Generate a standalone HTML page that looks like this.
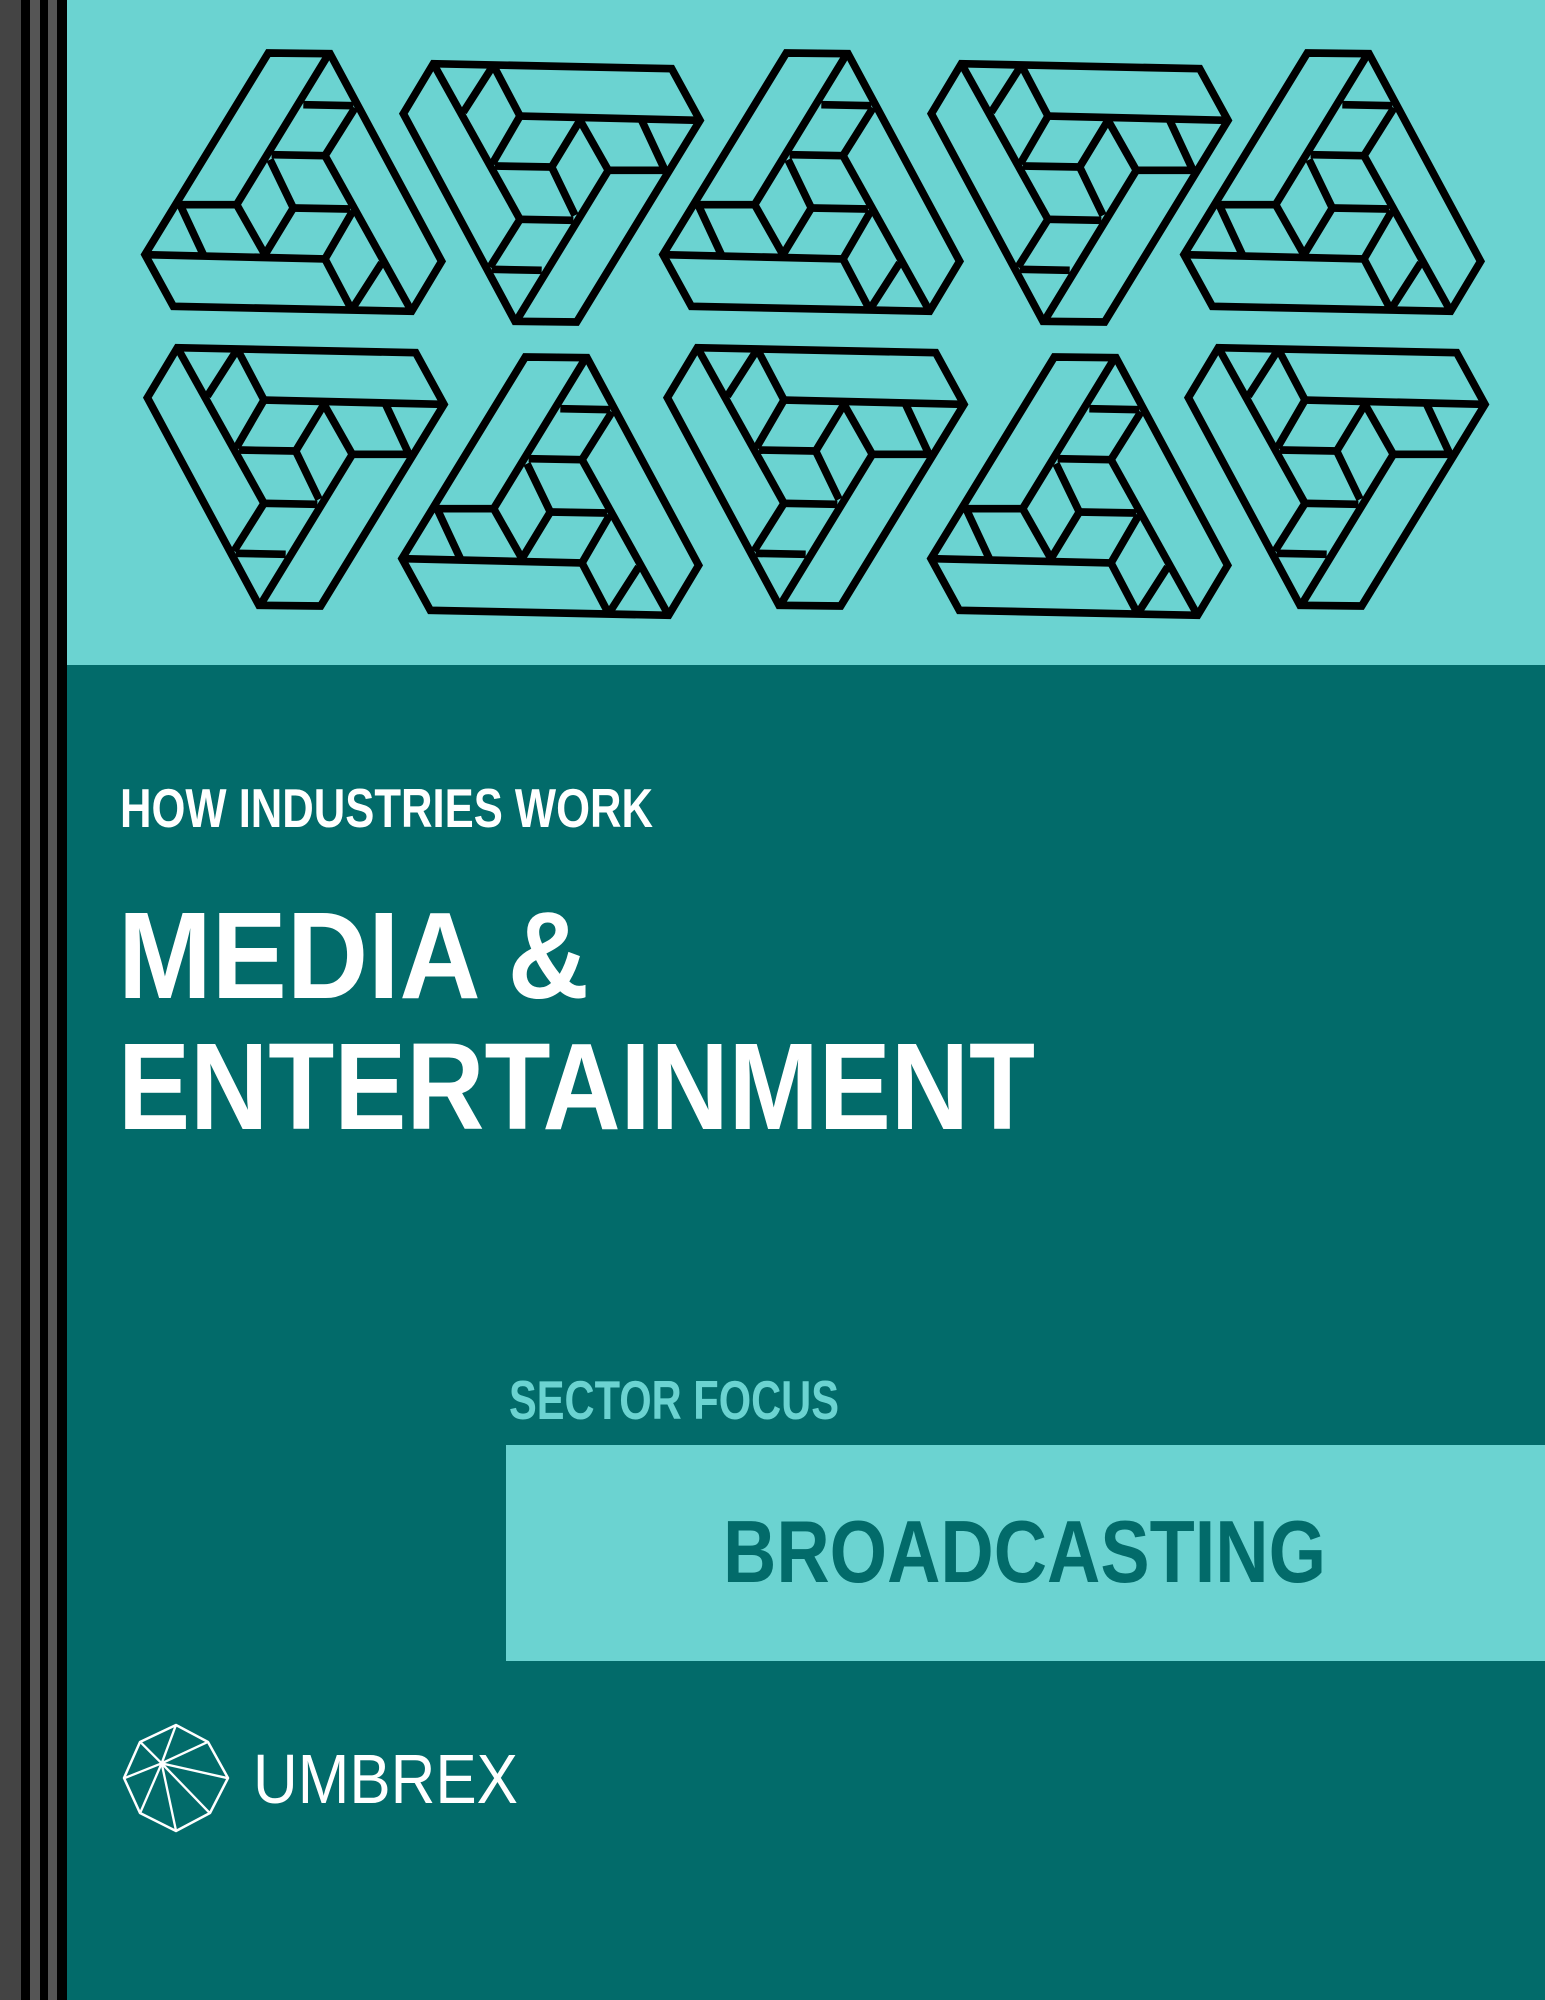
<!DOCTYPE html>
<html><head><meta charset="utf-8"><style>
html,body{margin:0;padding:0;background:#026b6a;}
svg{display:block}
</style></head><body>
<svg width="1545" height="2000" viewBox="0 0 1545 2000" xmlns="http://www.w3.org/2000/svg">
<defs>
<g id="tri" fill="none" stroke="#000" stroke-width="23" stroke-linejoin="miter" transform="scale(0.3333) translate(-435,-160)">
<polygon points="805,160 990,162 1325,785 1235,935 520,920 435,765"/>
<line x1="985" y1="165" x2="710" y2="615"/>
<line x1="910" y1="315" x2="1060" y2="318"/>
<line x1="1065" y1="325" x2="975" y2="468"/>
<line x1="815" y1="465" x2="975" y2="468"/>
<line x1="975" y1="468" x2="1235" y2="935"/>
<polyline points="810,480 880,625 795,765"/>
<line x1="710" y1="615" x2="795" y2="765"/>
<line x1="540" y1="615" x2="710" y2="615"/>
<line x1="540" y1="615" x2="610" y2="765"/>
<line x1="880" y1="625" x2="1050" y2="628"/>
<line x1="1058" y1="635" x2="975" y2="778"/>
<line x1="440" y1="765" x2="975" y2="778"/>
<line x1="975" y1="778" x2="1055" y2="930"/>
<line x1="1055" y1="930" x2="1145" y2="790"/>
</g>
</defs>
<rect x="0" y="0" width="1545" height="2000" fill="#026b6a"/>
<rect x="67" y="0" width="1478" height="665" fill="#6bd3d1"/>
<rect x="0" y="0" width="21" height="2000" fill="#444"/>
<rect x="21" y="0" width="9" height="2000" fill="#000"/>
<rect x="30" y="0" width="10" height="2000" fill="#555"/>
<rect x="40" y="0" width="8" height="2000" fill="#000"/>
<rect x="48" y="0" width="9" height="2000" fill="#555"/>
<rect x="57" y="0" width="10" height="2000" fill="#000"/>

<use href="#tri" transform="translate(145,53)"/>
<use href="#tri" transform="translate(663,53)"/>
<use href="#tri" transform="translate(1184,53)"/>
<use href="#tri" transform="translate(402,357)"/>
<use href="#tri" transform="translate(931,357)"/>
<use href="#tri" transform="translate(700,322) rotate(180)"/>
<use href="#tri" transform="translate(1228,322) rotate(180)"/>
<use href="#tri" transform="translate(444,606) rotate(180)"/>
<use href="#tri" transform="translate(964,606) rotate(180)"/>
<use href="#tri" transform="translate(1485,606) rotate(180)"/>

<g font-family="Liberation Sans, sans-serif" font-weight="bold">
<text x="120" y="827" font-size="55" fill="#fff" textLength="533" lengthAdjust="spacingAndGlyphs">HOW INDUSTRIES WORK</text>
<text x="118" y="998" font-size="123" fill="#fff" textLength="471" lengthAdjust="spacingAndGlyphs">MEDIA &amp;</text>
<text x="118" y="1129" font-size="123" fill="#fff" textLength="917" lengthAdjust="spacingAndGlyphs">ENTERTAINMENT</text>
<text x="509" y="1419" font-size="55" fill="#6bd3d1" textLength="330" lengthAdjust="spacingAndGlyphs">SECTOR FOCUS</text>
</g>
<rect x="506" y="1445" width="1039" height="216" fill="#6bd3d1"/>
<text x="723" y="1582" font-family="Liberation Sans, sans-serif" font-weight="bold" font-size="88" fill="#026b6a" textLength="603" lengthAdjust="spacingAndGlyphs">BROADCASTING</text>

<g fill="none" stroke="#fff" stroke-width="2.5" stroke-linejoin="round">
<polygon points="176,1725 208,1742 228,1778 210,1813 176,1831 140,1813 124,1778 140,1742"/>
<g transform="translate(100,1700) scale(0.3333)" stroke-width="7">
<line x1="185" y1="190" x2="120" y2="125"/>
<line x1="185" y1="190" x2="228" y2="75"/>
<line x1="185" y1="190" x2="325" y2="125"/>
<line x1="185" y1="190" x2="385" y2="235"/>
<line x1="185" y1="190" x2="330" y2="340"/>
<line x1="185" y1="190" x2="228" y2="392"/>
<line x1="185" y1="190" x2="120" y2="340"/>
<line x1="185" y1="190" x2="72" y2="235"/>
</g>
</g>
<text x="253" y="1803" font-family="Liberation Sans, sans-serif" font-size="70" fill="#fff" textLength="265" lengthAdjust="spacingAndGlyphs">UMBREX</text>
</svg>
</body></html>
